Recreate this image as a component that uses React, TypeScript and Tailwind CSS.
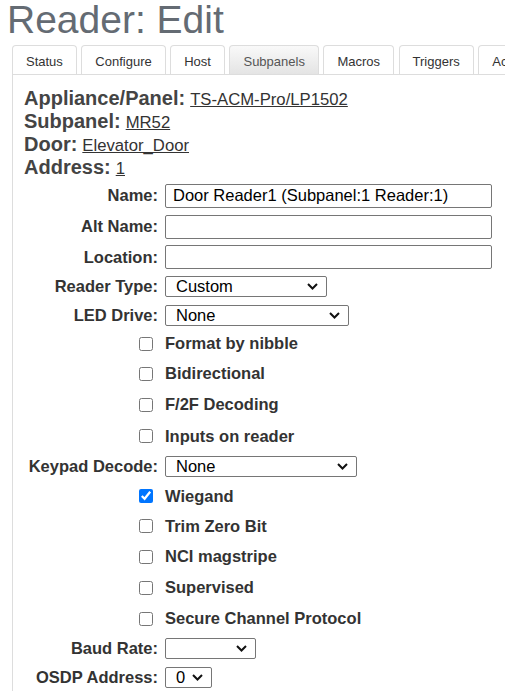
const font = { fontFamily: '"Liberation Sans", Arial, sans-serif' };

const tabs = ['Status', 'Configure', 'Host', 'Subpanels', 'Macros', 'Triggers', 'Actions'];

function Chevron() {
  return (
    <svg width="11" height="7" viewBox="0 0 11 7" className="shrink-0">
      <polyline points="1,1 5.5,5.5 10,1" fill="none" stroke="#111" strokeWidth="2" />
    </svg>
  );
}

function Select({ value, width }: { value: string; width: string }) {
  return (
    <div className={`flex h-[21px] items-center justify-between rounded-[2px] border border-[#767676] bg-white pl-[10px] pr-[8px] text-[16.5px] text-black ${width}`}>
      <span className="leading-none">{value}</span>
      <Chevron />
    </div>
  );
}

function Row({ label, h, children }: { label: string; h: string; children: React.ReactNode }) {
  return (
    <div className={`flex items-center ${h}`}>
      <div className="w-[135px] shrink-0 pr-[1px] text-right text-[16.5px] font-bold text-[#333]">{label}</div>
      <div className="ml-[6px] flex flex-1 items-center">{children}</div>
    </div>
  );
}

function TextInput({ value }: { value?: string }) {
  return (
    <div className="flex h-[24px] w-[327px] items-center rounded-[2px] border border-[#767676] bg-white px-[7px] text-[16.5px] text-black">
      {value}
    </div>
  );
}

function Check({ label, h, checked }: { label: string; h: string; checked?: boolean }) {
  return (
    <div className={`flex items-center ${h}`}>
      <div className="flex w-[135px] shrink-0 justify-end pr-[6px]">
        <input type="checkbox" defaultChecked={checked} className="m-0 h-[14px] w-[14px]" />
      </div>
      <div className="ml-[6px] text-[16.5px] font-bold text-[#333]">{label}</div>
    </div>
  );
}

function Info({ label, value }: { label: string; value: string }) {
  return (
    <div className="flex h-[23px] items-baseline gap-[5px] leading-[23px]">
      <b className="text-[20px]">{label}</b>
      <a className="text-[16.7px] text-[#333] underline">{value}</a>
    </div>
  );
}

export default function App() {
  return (
    <div className="h-[694px] w-[505px] overflow-hidden bg-white" style={font}>
      <h1 className="h-[40px] pl-[7px] text-[39px] leading-[40px] text-[#646b73]">Reader: Edit</h1>
      <div className="mt-[5px] ml-[12px] flex gap-[4.5px] border-b border-[#ddd] whitespace-nowrap">
        {tabs.map((t) => (
          <div
            key={t}
            className={`flex h-[29px] shrink-0 items-center rounded-t-[4px] border border-b-0 border-[#ddd] px-[13px] pt-[3px] text-[13px] ${
              t === 'Subpanels' ? 'bg-linear-to-b from-[#f9f9f9] to-[#e4e4e4] text-[#555]' : 'bg-white text-[#333]'
            }`}
          >
            {t}
          </div>
        ))}
      </div>
      <div className="ml-[12px] border-l border-[#ddd] pt-[12px] pl-[11px]">
        <div className="text-[#444]">
          <Info label="Appliance/Panel:" value="TS-ACM-Pro/LP1502" />
          <Info label="Subpanel:" value="MR52" />
          <Info label="Door:" value="Elevator_Door" />
          <Info label="Address:" value="1" />
        </div>
        <div className="mt-[1px]">
          <Row label="Name:" h="h-[31px]"><TextInput value="Door Reader1 (Subpanel:1 Reader:1)" /></Row>
          <Row label="Alt Name:" h="h-[31px]"><TextInput /></Row>
          <Row label="Location:" h="h-[30px]"><TextInput /></Row>
          <Row label="Reader Type:" h="h-[29px]"><Select value="Custom" width="w-[162px]" /></Row>
          <Row label="LED Drive:" h="h-[28px]"><Select value="None" width="w-[184px]" /></Row>
          <Check label="Format by nibble" h="h-[29px]" />
          <Check label="Bidirectional" h="h-[31px]" />
          <Check label="F/2F Decoding" h="h-[31px]" />
          <Check label="Inputs on reader" h="h-[32px]" />
          <Row label="Keypad Decode:" h="h-[29px]"><Select value="None" width="w-[192px]" /></Row>
          <Check label="Wiegand" h="h-[30px]" checked />
          <Check label="Trim Zero Bit" h="h-[30px]" />
          <Check label="NCI magstripe" h="h-[31px]" />
          <Check label="Supervised" h="h-[31px]" />
          <Check label="Secure Channel Protocol" h="h-[31px]" />
          <Row label="Baud Rate:" h="h-[29px]"><Select value="" width="w-[91px]" /></Row>
          <Row label="OSDP Address:" h="h-[28px]"><Select value="0" width="w-[47px]" /></Row>
        </div>
      </div>
    </div>
  );
}
